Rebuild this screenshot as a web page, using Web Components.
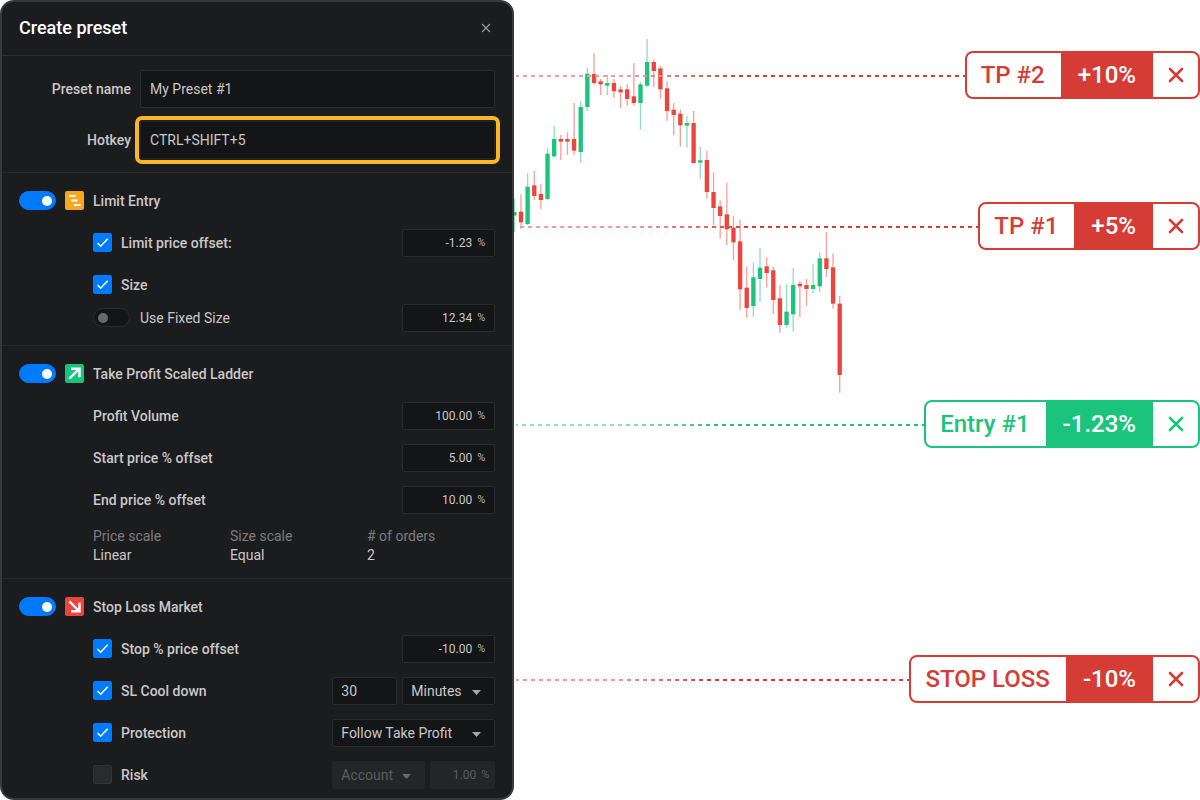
<!DOCTYPE html>
<html lang="en">
<head>
<meta charset="utf-8">
<meta name="viewport" content="width=device-width, initial-scale=1">
<title>Create preset</title>
<style>
  html, body { margin: 0; min-height: 100vh; background: #fff; }
  body { font-family: Roboto, "Liberation Sans", sans-serif; }
</style>
</head>
<body>
<trading-page>
  <preset-panel slot="panel" heading="Create preset">
    <preset-form>
      <text-row label="Preset name" value="My Preset #1"></text-row>
      <text-row label="Hotkey" value="CTRL+SHIFT+5" active></text-row>
    </preset-form>
    <preset-section heading="Limit Entry" icon="entry">
      <setting-row label="Limit price offset:" check="on" value="-1.23"></setting-row>
      <setting-row label="Size" check="on"></setting-row>
      <setting-row label="Use Fixed Size" check="switch" value="12.34" compact></setting-row>
    </preset-section>
    <preset-section heading="Take Profit Scaled Ladder" icon="profit">
      <setting-row label="Profit Volume" value="100.00"></setting-row>
      <setting-row label="Start price % offset" value="5.00"></setting-row>
      <setting-row label="End price % offset" value="10.00"></setting-row>
      <scale-summary></scale-summary>
    </preset-section>
    <preset-section heading="Stop Loss Market" icon="loss">
      <setting-row label="Stop % price offset" check="on" value="-10.00"></setting-row>
      <setting-row label="SL Cool down" check="on" amount="30" choice="Minutes"></setting-row>
      <setting-row label="Protection" check="on" choice="Follow Take Profit" wide></setting-row>
      <setting-row label="Risk" check="off" choice="Account" value="1.00" disabled></setting-row>
    </preset-section>
  </preset-panel>
  <candle-chart slot="chart">
    <price-level label="TP #2" value="+10%" style="--level: 51px"></price-level>
    <price-level label="TP #1" value="+5%" style="--level: 202px"></price-level>
    <price-level label="Entry #1" value="-1.23%" side="entry" style="--level: 400px"></price-level>
    <price-level label="STOP LOSS" value="-10%" style="--level: 655px"></price-level>
  </candle-chart>
</trading-page>

<script>
class Base extends HTMLElement {
  connectedCallback() {
    if (this.shadowRoot) return;
    this.attachShadow({ mode: 'open' }).innerHTML =
      '<style>*{box-sizing:border-box}input,select,button{font:inherit;color:inherit;margin:0}</style>' + this.render();
  }
  at(name) { return this.getAttribute(name) || ''; }
}

customElements.define('trading-page', class extends Base {
  render() {
    return `<style>
      :host { display: grid; grid-template-columns: 3fr 4fr; min-height: 100vh; }
    </style><slot name="panel"></slot><slot name="chart"></slot>`;
  }
});

customElements.define('preset-panel', class extends Base {
  render() {
    return `<style>
      :host { display: block; box-sizing: border-box; background: #1b1c1e; color: #cac8c8;
        border: 2px solid #37393d; border-radius: 14px; overflow: hidden; font-size: 14px; font-weight: 500; }
      header { display: flex; align-items: center; justify-content: space-between; height: 54px;
        padding: 0 16px 2px 17px; border-bottom: 1px solid #2c2d30; }
      h1 { margin: 0; font-size: 18px; line-height: 24px; font-weight: 500; color: #fff; }
      button { display: grid; place-items: center; width: 20px; height: 20px; padding: 0; border: 0; background: none; color: #96979a; }
    </style>
    <header><h1>${this.at('heading')}</h1>
      <button type="button" aria-label="Close"><svg width="10" height="10" viewBox="0 0 10 10" stroke="currentColor" stroke-width="1.3"><path d="M1 1l8 8M9 1l-8 8"/></svg></button>
    </header><slot></slot>`;
  }
});

customElements.define('preset-form', class extends Base {
  render() {
    return `<style>
      :host { display: flex; flex-direction: column; gap: 13px; padding: 14px 17px 13px; }
    </style><slot></slot>`;
  }
});

customElements.define('text-row', class extends Base {
  render() {
    return `<style>
      :host { display: grid; grid-template-columns: 112px 1fr; column-gap: 9px; align-items: center; }
      label { text-align: right; }
      input { width: 100%; height: 38px; padding: 0 9px 1px; background: #141517; border: 1px solid #2a2b2d;
        border-radius: 2px; font-weight: 400; outline: none; }
      :host([active]) input { outline: 4px solid #fbb526; outline-offset: 1px; border-color: #222325; }
    </style>
    <label for="field">${this.at('label')}</label><input id="field" type="text" value="${this.at('value')}">`;
  }
});

const SWITCH = `
  .switch { appearance: none; flex: none; display: grid; align-items: center; width: 37px; height: 19px; padding: 0 3px 0 4px;
    border-radius: 10px; background: #141517; border: 1px solid #2a2b2d; }
  .switch::before { content: ""; width: 10px; height: 10px; border-radius: 50%; background: #69696b; }
  .switch:checked { background: #007aff; border-color: #007aff; }
  .switch:checked::before { justify-self: end; background: #fff; }`;

const ICONS = {
  entry: '<rect width="19" height="19" rx="2" fill="#f9a720"/><path d="M4 5h6.500M6.500 9.500h6M9 14h6.500" stroke="#fff" stroke-width="2"/>',
  profit: '<rect width="19" height="19" rx="2" fill="#1bc47d"/><path d="M4.300 14.700L14 5M6 4.800h8.500v8.500" fill="none" stroke="#fff" stroke-width="2.400"/>',
  loss: '<rect width="19" height="19" rx="2" fill="#ee443c"/><path d="M4.300 4.300L14 14M6 14.200h8.500V5.700" fill="none" stroke="#fff" stroke-width="2.400"/>'
};

customElements.define('preset-section', class extends Base {
  render() {
    return `<style>
      :host { display: block; border-top: 1px solid #28292b; padding: 7px 17px 0; }
      .head { display: flex; align-items: center; gap: 9px; height: 42px; padding-bottom: 1px; }
      h2 { margin: 0; font: inherit; }
      .body { padding-left: 74px; }
      ${SWITCH}
    </style>
    <div class="head"><input class="switch" id="on" type="checkbox" role="switch" checked>
      <svg width="19" height="19" viewBox="0 0 19 19" aria-hidden="true">${ICONS[this.at('icon')]}</svg>
      <h2><label for="on">${this.at('heading')}</label></h2></div>
    <div class="body"><slot></slot></div>`;
  }
});

customElements.define('setting-row', class extends Base {
  render() {
    const label = this.at('label'), check = this.at('check'), off = this.hasAttribute('disabled') ? 'disabled' : '';
    const has = n => this.hasAttribute(n);
    const box = check === 'switch' ? '<input class="switch" id="c" type="checkbox" role="switch">'
      : check ? `<span class="tick"><input id="c" type="checkbox" ${check === 'on' ? 'checked' : ''}><svg width="19" height="19" viewBox="0 0 19 19" fill="none" stroke="#fff" stroke-width="1.500"><path d="M4.500 10l3.200 3.200 7-7.500"/></svg></span>` : '';
    return `<style>
      :host { display: flex; align-items: center; gap: 9px; height: 42px; padding-bottom: 1px; box-sizing: border-box; }
      :host([compact]) { height: 24px; margin-bottom: 15px; gap: 10px; font-weight: 400; }
      .controls { display: flex; gap: 5px; margin-left: auto; }
      .tick { display: grid; flex: none; }
      .tick > * { grid-area: 1 / 1; pointer-events: none; }
      .tick input { appearance: none; pointer-events: auto; width: 19px; height: 19px; border-radius: 2px; background: #2a2b2d; border: 1px solid #323335; }
      .tick input:checked { background: #007aff; border-color: #007aff; }
      .tick input:not(:checked) + svg { visibility: hidden; }
      .box { display: grid; grid-template-columns: 1fr auto; align-items: center; height: 28px; background: #141517;
        border: 1px solid #2a2b2d; border-radius: 2px; font-weight: 400; }
      .box input, .box select { min-width: 0; width: 100%; height: 26px; padding: 0; border: 0; background: none; outline: none; opacity: 1; }
      .percent { width: 93px; padding-right: 9px; column-gap: 5px; font-size: 12px; }
      .percent input { text-align: right; }
      .percent span { font-size: 11px; color: #b4b4b4; }
      .amount { width: 65px; padding-left: 8px; }
      .choice { width: 93px; }
      .choice > * { grid-area: 1 / 1 / 2 / 3; }
      .choice select { appearance: none; padding-left: 8px; }
      .choice svg { justify-self: end; margin: 3px 13px 0 0; pointer-events: none; }
      :host([wide]) .choice { width: 163px; }
      :host([disabled]) .box { background: #242527; border-color: #242527; color: #5c5d5f; }
      :host([disabled]) .percent { width: 65px; padding-right: 5px; }
      :host([disabled]) .percent span { color: #5c5d5f; }
      .choice svg { color: #a8a8a8; }
      :host([disabled]) .choice svg { color: #6a6b6d; }
      ${SWITCH}
    </style>${box}<label for="${check ? 'c' : 'v'}">${label}</label>
    <div class="controls">
      ${has('amount') ? `<div class="box amount"><input type="text" inputmode="numeric" aria-label="${label} amount" value="${this.at('amount')}"></div>` : ''}
      ${has('choice') ? `<div class="box choice"><select aria-label="${label} option" ${off}><option>${this.at('choice')}</option></select><svg width="9" height="5" viewBox="0 0 9 5"><path d="M0 0h9L4.500 5z" fill="currentColor"/></svg></div>` : ''}
      ${has('value') ? `<div class="box percent"><input id="v" type="text" inputmode="decimal" aria-label="${label} percent" value="${this.at('value')}" ${off}><span>%</span></div>` : ''}
    </div>`;
  }
});

customElements.define('scale-summary', class extends Base {
  render() {
    return `<style>
      :host { display: block; padding: 6px 0 13px; font-weight: 400; line-height: 19px; }
      dl { display: grid; grid-template-columns: repeat(3, 137px); margin: 0; }
      dt { color: #7d7d7e; }
      dd { margin: 0; }
    </style>
    <dl><div><dt>Price scale</dt><dd>Linear</dd></div><div><dt>Size scale</dt><dd>Equal</dd></div><div><dt># of orders</dt><dd>2</dd></div></dl>`;
  }
});

/* Candle rows: colour, wick top, wick bottom, body top, body bottom, in thirds of a pixel. */
const RISE = `g 506 606 546 557,r 493 597 545 577,g 430 585 470 582,r 422 510 466 498,r 462 538 492 510,g 353 510 371 507,
g 287 383 327 379,r 315 390 327 335,r 307 375 327 335,r 219 375 327 362,g 214 398 231 366,g 114 242 131 231,r 70 165 132 159,
r 147 195 154 163,g 134 195 159 167,r 147 203 159 184,r 168 234 178 187,r 163 227 178 207,r 99 227 199 219,g 155 299 163 219,
g 27 171 96 167,r 88 171 96 123,r 108 207 115 178,r 154 273 175 243,r 219 315 239 255,r 239 350 251 286,g 258 353 279 287,r 243 402 279 399`;
const FALL = `g 200 296 241 248,r 212 356 240 336,r 277 435 336 384,r 361 475 379 408,r 308 495 403 448,r 408 540 443 487,
r 419 690 484 628,r 560 714 623 684,g 548 711 592 678,g 504 666 563 597,r 532 622 559 579,r 561 702 571 660,r 615 758 655 735,
g 612 743 695 735,g 563 755 615 703,r 604 711 611 619,r 597 679 615 627,g 551 639 615 627,g 518 636 535 619,r 456 591 535 567,
r 520 686 562 671,r 648 938 671 885`;
const session = (text, base) => text.split(',').map(row => {
  const [side, ...ys] = row.trim().split(' ');
  return [side, ...ys.map(y => +y + base)];
});

customElements.define('candle-chart', class extends Base {
  render() {
    const bars = [...session(RISE, 90), ...session(FALL, 240)].map(([side, top, bottom, open, close], i) => {
      const x = 1 + i * 19.92, fill = side === 'g' ? '#1bc47d' : '#ee443c';
      return `<g fill="${fill}"><rect x="${x - 2}" y="${top}" width="4" height="${bottom - top}" opacity=".5"/><rect x="${x - 6.5}" y="${open}" width="13" height="${close - open}"/></g>`;
    }).join('');
    return `<style>
      :host { display: block; position: relative; overflow: hidden; }
      svg { display: block; height: 800px; }
    </style><svg viewBox="0 0 2058 2400" preserveAspectRatio="xMinYMin meet" role="img" aria-label="Price chart">${bars}</svg><slot></slot>`;
  }
});

customElements.define('price-level', class extends Base {
  render() {
    return `<style>
      :host { position: absolute; top: var(--level); left: 0; right: 0; display: flex; align-items: center;
        --tone: #d63c36; color: var(--tone); font-size: 24px; font-weight: 500; line-height: 44px; }
      :host([side="entry"]) { --tone: #1bc47d; }
      .line { flex: 1; height: 2px; margin: 2px 0 0 2px;
        background: linear-gradient(to right, color-mix(in srgb, var(--tone) 50%, #fff) 25%, var(--tone) 50%);
        mask: repeating-linear-gradient(to left, #000 0 2px, transparent 2px 6px, #000 6px 8px); }
      .tag { display: flex; border: 2px solid var(--tone); border-radius: 8px; background: #fff; overflow: hidden; }
      .name { padding: 0 16px 0 14px; }
      .value { padding: 0 17px; background: var(--tone); color: #fff; }
      button { display: grid; place-items: center; width: 45px; padding: 0; border: 0; background: none; }
    </style>
    <div class="line"></div>
    <div class="tag"><span class="name">${this.at('label')}</span><span class="value">${this.at('value')}</span>
      <button type="button" aria-label="Remove ${this.at('label')}"><svg width="16" height="16" viewBox="0 0 16 16" stroke="currentColor" stroke-width="2.600" stroke-linecap="round"><path d="M2 2l12 12M14 2L2 14"/></svg></button></div>`;
  }
});
</script>
</body>
</html>
